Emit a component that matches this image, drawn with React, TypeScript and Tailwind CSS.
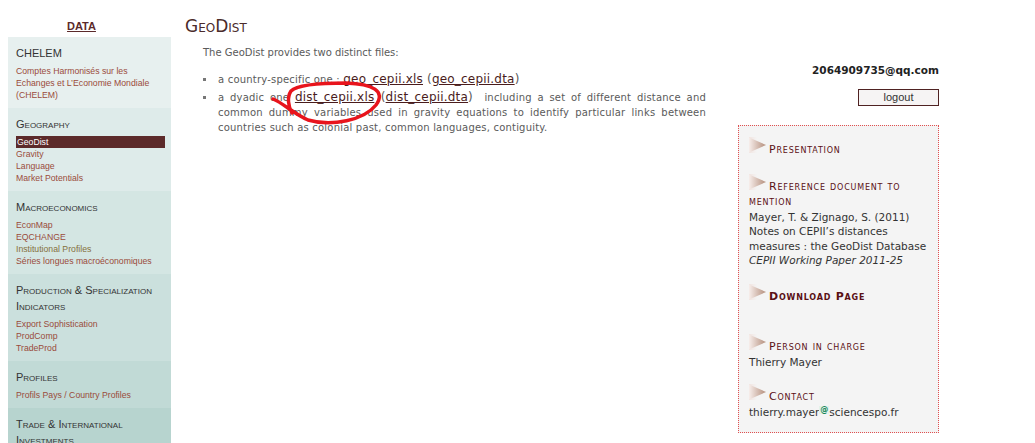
import React from 'react';

type Section = {
  title: string;
  bg: string;
  links: { label: string; active?: boolean; olive?: boolean }[];
};

const sections: Section[] = [
  {
    title: 'CHELEM',
    bg: 'bg-[#e7f0ef]',
    links: [{ label: 'Comptes Harmonisés sur les Echanges et L’Economie Mondiale (CHELEM)' }],
  },
  {
    title: 'Geography',
    bg: 'bg-[#deebea]',
    links: [
      { label: 'GeoDist', active: true },
      { label: 'Gravity' },
      { label: 'Language' },
      { label: 'Market Potentials' },
    ],
  },
  {
    title: 'Macroeconomics',
    bg: 'bg-[#d4e6e3]',
    links: [
      { label: 'EconMap' },
      { label: 'EQCHANGE' },
      { label: 'Institutional Profiles', olive: true },
      { label: 'Séries longues macroéconomiques' },
    ],
  },
  {
    title: 'Production & Specialization Indicators',
    bg: 'bg-[#cbe0dd]',
    links: [{ label: 'Export Sophistication' }, { label: 'ProdComp' }, { label: 'TradeProd' }],
  },
  {
    title: 'Profiles',
    bg: 'bg-[#c1dad6]',
    links: [{ label: 'Profils Pays / Country Profiles' }],
  },
  {
    title: 'Trade & International Investments',
    bg: 'bg-[#b7d4cf]',
    links: [{ label: 'Chelem' }],
  },
];

const Arrow = () => (
  <svg width="18" height="16" viewBox="0 0 18 16" className="inline-block align-baseline">
    <defs>
      <linearGradient id="arrowFade" x1="0" y1="0" x2="1" y2="0">
        <stop offset="0" stopColor="#f7eeeb" />
        <stop offset="1" stopColor="#b48e7c" />
      </linearGradient>
      <linearGradient id="arrowBand" x1="0" y1="0" x2="1" y2="0">
        <stop offset="0" stopColor="#f1e4e0" />
        <stop offset="1" stopColor="#f1e4e0" stopOpacity="0" />
      </linearGradient>
    </defs>
    <rect x="0" y="0" width="8" height="16" fill="url(#arrowBand)" />
    <polygon points="0,0.5 17,8 0,15.5" fill="url(#arrowFade)" />
  </svg>
);

const Sidebar = () => (
  <div className="w-[171px] shrink-0 font-['Liberation_Sans',Arial,sans-serif]">
    <div className="w-[163px] pt-[17px] mb-[3px] text-center leading-[16px]">
      <span className="text-[11px] font-bold underline text-[#5c2a2a]">DATA</span>
    </div>
    <div className="ml-2 w-[163px]">
      {sections.map((s) => (
        <div key={s.title} className={`${s.bg} pl-2 pr-[6px] pt-2 pb-[7px]`}>
          <div className="text-[11px] leading-[16px] text-[#333333] [font-variant:small-caps] mb-[4px]">
            {s.title}
          </div>
          {s.links.map((l) =>
            l.active ? (
              <div key={l.label} className="bg-[#5c2a2a] text-white text-[8.7px] leading-[12px] pl-px">
                {l.label}
              </div>
            ) : (
              <div
                key={l.label}
                className={`text-[8.7px] leading-[12px] ${l.olive ? 'text-[#85703c]' : 'text-[#9a4b3b]'}`}
              >
                {l.label}
              </div>
            )
          )}
        </div>
      ))}
    </div>
  </div>
);

const FileLink = ({ children }: { children: React.ReactNode }) => (
  <a className="underline text-[#4a1c1c] cursor-pointer">{children}</a>
);

const Main = () => (
  <div className="ml-[14px] w-[521px] shrink-0 font-['DejaVu_Sans',Verdana,sans-serif]">
    <h1 className="pt-4 text-[17px] leading-[20px] text-[#4b2b2b] [font-variant:small-caps]">GeoDist</h1>
    <p className="mt-[9px] pl-[18px] text-[10px] leading-[15px] text-[#5a5a5a]">
      The GeoDist provides two distinct files:
    </p>
    <ul className="mt-[12px] pl-[18px] text-[10px] leading-[15px] text-[#5a5a5a] tracking-[0.2px]">
      <li className="flex">
        <span className="w-[15px] shrink-0 pt-[6px]">
          <span className="block w-[3px] h-[3px] bg-[#777777]" />
        </span>
        <span className="flex-1 text-justify">
          a country-specific one :{' '}
          <span className="text-[12px]">
            <FileLink>geo_cepii.xls</FileLink> (<FileLink>geo_cepii.dta</FileLink>)
          </span>
        </span>
      </li>
      <li className="flex mt-[3px]">
        <span className="w-[15px] shrink-0 pt-[6px]">
          <span className="block w-[3px] h-[3px] bg-[#777777]" />
        </span>
        <span className="flex-1 text-justify">
          a dyadic one{' '}
          <span className="text-[12px]">
            <FileLink>dist_cepii.xls</FileLink> (<FileLink>dist_cepii.dta</FileLink>)
          </span>
          &nbsp; including a set of different distance and common dummy variables used in gravity equations to
          identify particular links between countries such as colonial past, common languages, contiguity.
        </span>
      </li>
    </ul>
  </div>
);

const Heading = ({ children, bold }: { children: React.ReactNode; bold?: boolean }) => (
  <span
    className={`ml-[2px] text-[11px] tracking-[0.8px] text-[#5a1014] [font-variant:small-caps] ${
      bold ? 'font-bold' : ''
    }`}
  >
    {children}
  </span>
);

const RightColumn = () => (
  <div className="ml-[32px] w-[201px] shrink-0 pt-[63px] font-['DejaVu_Sans',Verdana,sans-serif] text-[#333333]">
    <div className="text-right text-[10.5px] font-bold leading-[15px] text-[#222222]">2064909735@qq.com</div>
    <div className="flex justify-end mt-[11px]">
      <button className="w-[81px] h-[17px] border border-[#4f2222] bg-[#f6f4f4] text-[11px] leading-[15px] text-[#333333] font-['Liberation_Sans',Arial,sans-serif]">
        logout
      </button>
    </div>
    <div className="mt-[19px] border border-dotted border-[#e05050] bg-[#f4f4f4] pl-[10px] pr-[10px] pt-[11px] pb-[13px] text-[10.5px] leading-[14.5px]">
      <p>
        <Arrow />
        <Heading>Presentation</Heading>
      </p>
      <p className="mt-[16px]">
        <Arrow />
        <Heading>Reference document to mention</Heading>
        <br />
        Mayer, T. &amp; Zignago, S. (2011)
        <br />
        Notes on CEPII’s distances measures : the GeoDist Database
        <br />
        <i>CEPII Working Paper 2011-25</i>
      </p>
      <p className="mt-[16px]">
        <Arrow />
        <Heading bold>Download Page</Heading>
      </p>
      <p className="mt-[30px]">
        <Arrow />
        <Heading>Person in charge</Heading>
        <br />
        Thierry Mayer
      </p>
      <p className="mt-[15px]">
        <Arrow />
        <Heading>Contact</Heading>
        <br />
        thierry.mayer
        <span className="inline-block align-[4px] text-[8px] leading-[8px] font-bold text-[#16865a] bg-[#e4f2ea] px-px">
          @
        </span>
        sciencespo.fr
      </p>
    </div>
  </div>
);

export default function App() {
  return (
    <div className="relative w-[1035px] h-[443px] overflow-hidden bg-white">
      <div className="flex items-start">
        <Sidebar />
        <Main />
        <RightColumn />
      </div>
      <svg
        className="absolute left-0 top-0 pointer-events-none"
        width="1035"
        height="443"
        viewBox="0 0 1035 443"
      >
        <path
          d="M 273 99 C 283 103, 294 114, 308 120 C 332 127, 364 120, 376 105 C 386 91, 373 84, 346 83 C 320 83, 297 85, 291 91 C 287 97, 288 106, 292 113"
          fill="none"
          stroke="#e8141c"
          strokeWidth="3.5"
          strokeLinecap="round"
        />
      </svg>
    </div>
  );
}
